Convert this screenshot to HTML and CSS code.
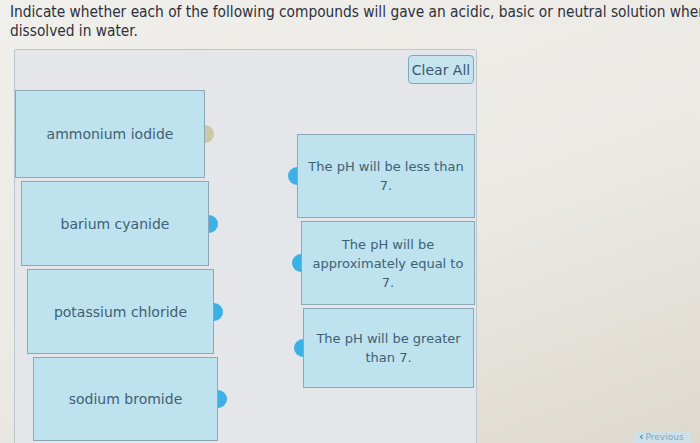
FILE: index.html
```html
<!DOCTYPE html>
<html>
<head>
<meta charset="utf-8">
<link rel="stylesheet" href="styles.css">
</head>
<body>
<div class="page">
  <p class="question">Indicate whether each of the following compounds will gave an acidic, basic or neutral solution when dissolved in water.</p>
  <div class="panel">
    <div class="panel-head">
      <button class="clear-btn">Clear All</button>
    </div>
    <div class="panel-body">
      <div class="col-left">
        <div class="item item-1"><span>ammonium iodide</span><i class="tab tab-right tab-muted"></i></div>
        <div class="item item-2"><span>barium cyanide</span><i class="tab tab-right"></i></div>
        <div class="item item-3"><span>potassium chloride</span><i class="tab tab-right"></i></div>
        <div class="item item-4"><span>sodium bromide</span><i class="tab tab-right"></i></div>
      </div>
      <div class="col-right">
        <div class="target target-1"><i class="tab tab-left"></i><span>The pH will be less than 7.</span></div>
        <div class="target target-2"><i class="tab tab-left"></i><span>The pH will be approximately equal to 7.</span></div>
        <div class="target target-3"><i class="tab tab-left"></i><span>The pH will be greater than 7.</span></div>
      </div>
    </div>
  </div>
  <div class="prev-btn"><span class="prev-arrow">&#8249;</span>Previous</div>
</div>
</body>
</html>
```

FILE: styles.css
```css
html, body {
  margin: 0;
  padding: 0;
}
body {
  width: 700px;
  height: 443px;
  overflow: hidden;
  background: linear-gradient(160deg, #f0efeb 0%, #ebe9e4 55%, #ddd9cf 100%);
  font-family: "DejaVu Sans", Verdana, sans-serif;
}
.page {
  position: relative;
  width: 700px;
  height: 443px;
}
.question {
  margin: 0;
  padding: 3px 0 0 10px;
  width: 720px;
  font-family: "DejaVu Sans Condensed", "DejaVu Sans", sans-serif;
  font-size: 15.3px;
  line-height: 19px;
  color: #2c303c;
}
.panel {
  margin: 8px 0 0 14px;
  width: 461px;
  height: 400px;
  background: #e4e6ea;
  border: 1px solid #bcc6cf;
  border-radius: 2px;
}
.panel-head {
  display: flex;
  justify-content: flex-end;
  padding: 5px 2px 0 0;
}
.clear-btn {
  width: 66px;
  height: 29px;
  padding: 0;
  background: #c6e4ee;
  border: 1px solid #7fa9bc;
  border-radius: 4px;
  font-family: "DejaVu Sans", Verdana, sans-serif;
  font-size: 14px;
  color: #3a5870;
}
.panel-body {
  display: flex;
  padding-top: 6px;
}
.col-left {
  display: flex;
  flex-direction: column;
  gap: 3px;
  width: 282px;
}
.item, .target {
  position: relative;
  display: flex;
  align-items: center;
  justify-content: center;
  box-sizing: border-box;
  background: #bee2ee;
  border: 1px solid #8aa8b8;
  text-align: center;
  color: #3f6174;
}
.item {
  width: 190px;
  height: 87px;
  font-size: 14px;
}
.item-1 { margin-left: 0; height: 88px; }
.item-2 { margin-left: 6px; width: 188px; height: 85px; }
.item-3 { margin-left: 12px; width: 187px; height: 85px; }
.item-4 { margin-left: 18px; width: 185px; height: 84px; }
.col-right {
  display: flex;
  flex-direction: column;
  gap: 3px;
  margin-top: 44px;
}
.target {
  width: 178px;
  height: 84px;
  padding: 0 6px;
  font-size: 13px;
  line-height: 19px;
}
.target-1 { margin-left: 0; }
.target-2 { margin-left: 4px; width: 174px; }
.target-3 { margin-left: 6px; width: 171px; height: 80px; }
.tab {
  position: absolute;
  top: 50%;
  width: 9px;
  height: 18px;
  margin-top: -9px;
  background: #3cb1e5;
}
.tab-right {
  right: -10px;
  border-radius: 0 9px 9px 0;
}
.tab-left {
  left: -10px;
  border-radius: 9px 0 0 9px;
}
.tab-muted {
  background: #cbc8a8;
}
.prev-btn {
  position: absolute;
  right: 8px;
  bottom: 0;
  width: 58px;
  height: 12px;
  border-radius: 6px 6px 0 0;
  background: #cfe0e8;
  font-size: 9px;
  line-height: 12px;
  color: #7ea8c2;
  padding-left: 5px;
  box-sizing: border-box;
}
.prev-arrow {
  color: #2f8fcc;
  font-weight: bold;
  font-size: 11px;
  margin-right: 2px;
}
```
